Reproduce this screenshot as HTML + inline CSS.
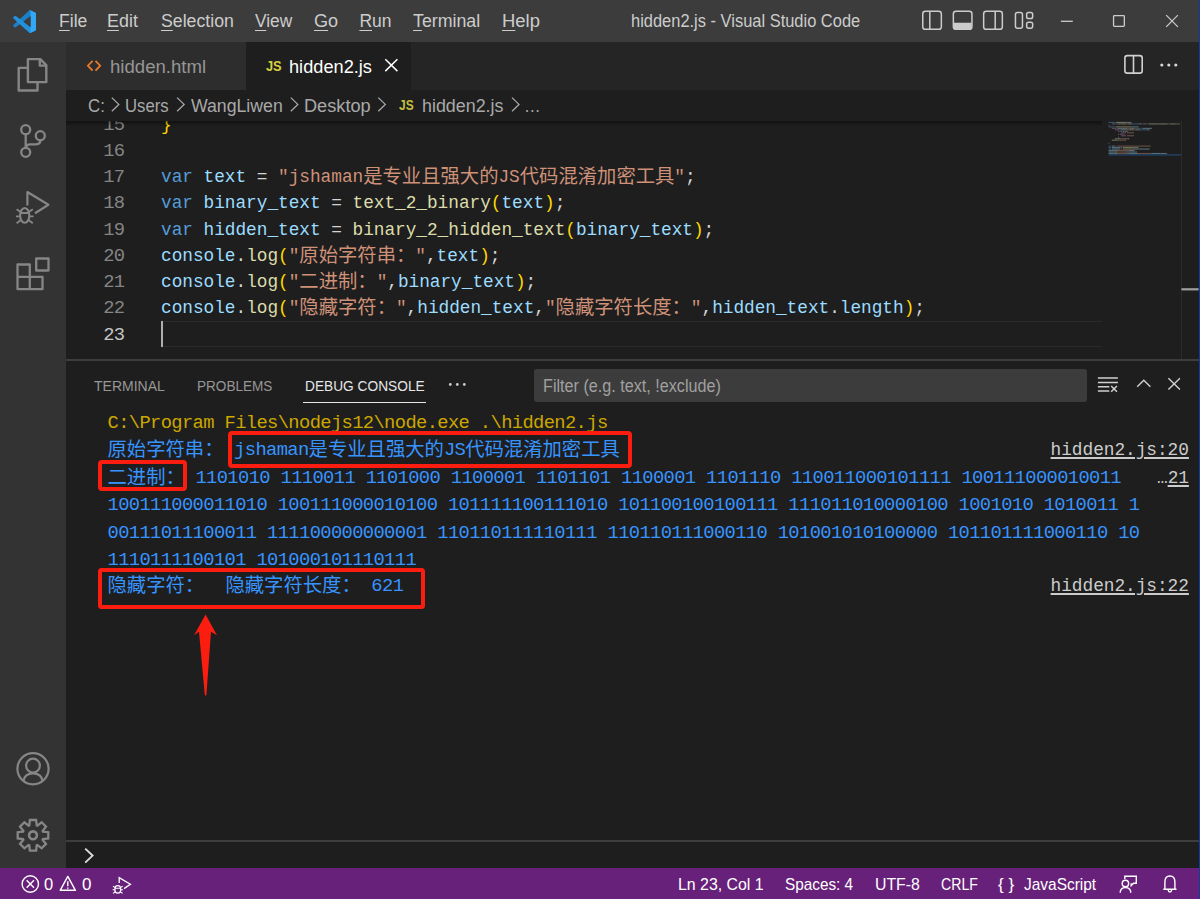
<!DOCTYPE html>
<html lang="zh-CN"><head><meta charset="utf-8"><title>hidden2.js - Visual Studio Code</title>
<style>
html,body{margin:0;padding:0;}
body{width:1200px;height:899px;overflow:hidden;background:#1e1e1e;position:relative;font-family:"Liberation Sans","Noto Sans CJK SC",sans-serif;}
.b{position:absolute;}
.t{position:absolute;line-height:0;white-space:pre;transform-origin:0 0;font-family:"Liberation Sans","Noto Sans CJK SC",sans-serif;}
.m{font-family:"Liberation Mono","Noto Sans CJK SC",monospace;}
.ln{position:absolute;left:0;height:26px;line-height:26px;white-space:pre;font-family:"Liberation Mono","Noto Sans CJK SC",monospace;font-size:17.8px;letter-spacing:-0.032px;color:#d4d4d4;}
.ln .c,.co .c{font-size:19.33px;letter-spacing:0;line-height:0;position:relative;top:1px;font-family:"Noto Sans CJK SC","Liberation Mono",monospace;}
.num{position:absolute;width:60px;text-align:right;font-size:18.8px;letter-spacing:-0.632px;}
.code{position:absolute;left:161px;}
.k{color:#569cd6}.v{color:#9cdcfe}.f{color:#dcdcaa}.s{color:#ce9178}.y{color:#ffd700}
.co{position:absolute;left:107.5px;height:27px;line-height:27px;white-space:pre;font-family:"Liberation Mono","Noto Sans CJK SC",monospace;font-size:18.8px;letter-spacing:-0.632px;color:#3794ff;}
.lk{position:absolute;height:27px;line-height:27px;white-space:pre;font-family:"Liberation Mono",monospace;font-size:17.8px;letter-spacing:-0.032px;color:#cccccc;}
.lk span{text-decoration:underline;text-underline-offset:2px;text-decoration-thickness:1.5px;}
svg{position:absolute;overflow:visible;}
u{text-decoration-thickness:1.4px;text-underline-offset:2.5px;}
</style></head><body>
<div class="b" style="left:0;top:0;width:1198.6px;height:41.6px;background:#3c3c3c"></div>
<div class="b" style="left:0;top:41.6px;width:66.2px;height:826.4px;background:#333333"></div>
<div class="b" style="left:66px;top:41.6px;width:1132.6px;height:48.2px;background:#252526"></div>
<div class="b" style="left:66px;top:41.6px;width:179.6px;height:48.2px;background:#2d2d2d"></div>
<div class="b" style="left:245.6px;top:41.6px;width:165.3px;height:48.4px;background:#1e1e1e"></div>
<div class="b" style="left:66px;top:90px;width:1132.6px;height:778px;background:#1e1e1e"></div>
<div class="b" style="left:0;top:868px;width:1198.6px;height:31px;background:#68217a"></div>
<div class="b" style="left:1198.6px;top:0;width:2px;height:899px;background:#0c3e9e"></div>
<div class="t" style="top:21.14px;font-size:17.5px;color:#cccccc;left:58.63px;transform:scaleX(1.0049);"><u>F</u>ile</div>
<div class="t" style="top:21.14px;font-size:17.5px;color:#cccccc;left:107.35px;transform:scaleX(1.0226);"><u>E</u>dit</div>
<div class="t" style="top:21.14px;font-size:17.5px;color:#cccccc;left:160.70px;transform:scaleX(1.0112);"><u>S</u>election</div>
<div class="t" style="top:21.14px;font-size:17.5px;color:#cccccc;left:255.00px;transform:scaleX(0.9913);"><u>V</u>iew</div>
<div class="t" style="top:21.14px;font-size:17.5px;color:#cccccc;left:314.15px;transform:scaleX(1.0314);"><u>G</u>o</div>
<div class="t" style="top:21.14px;font-size:17.5px;color:#cccccc;left:359.38px;"><u>R</u>un</div>
<div class="t" style="top:21.14px;font-size:17.5px;color:#cccccc;left:413.47px;transform:scaleX(1.0162);"><u>T</u>erminal</div>
<div class="t" style="top:21.14px;font-size:17.5px;color:#cccccc;left:501.56px;transform:scaleX(1.0541);"><u>H</u>elp</div>
<div class="t" style="top:21.14px;font-size:17.5px;color:#cccccc;left:630.97px;transform:scaleX(0.9398);">hidden2.js - Visual Studio Code</div>
<div class="t" style="top:66.94px;font-size:17.5px;color:#969696;left:110.09px;transform:scaleX(1.0626);">hidden.html</div>
<div class="t" style="top:66.94px;font-size:17.5px;color:#ffffff;left:288.86px;transform:scaleX(1.0398);">hidden2.js</div>
<div class="t" style="top:66.00px;font-size:15px;color:#d6d040;left:265.94px;transform:scaleX(0.8526);font-weight:bold;">JS</div>
<div class="t" style="top:386.17px;font-size:14.8px;color:#979797;left:94.45px;transform:scaleX(0.9455);">TERMINAL</div>
<div class="t" style="top:386.17px;font-size:14.8px;color:#979797;left:197.41px;transform:scaleX(0.9169);">PROBLEMS</div>
<div class="t" style="top:386.17px;font-size:14.8px;color:#e7e7e7;left:304.90px;transform:scaleX(0.9269);">DEBUG CONSOLE</div>
<div class="b" style="left:303px;top:401.8px;width:123px;height:1.4px;background:#e7e7e7"></div>
<div class="b" style="left:66px;top:359.4px;width:1132.6px;height:1.8px;background:#3d3d3d"></div>
<div class="b" style="left:534px;top:368.8px;width:553px;height:33px;background:#3c3c3c;border-radius:3px"></div>
<div class="t" style="top:385.94px;font-size:17.5px;color:#a0a0a0;left:542.74px;transform:scaleX(0.9238);">Filter (e.g. text, !exclude)</div>
<div class="t" style="top:884.42px;font-size:16.1px;color:#ffffff;left:44.48px;transform:scaleX(1.0248);">0</div>
<div class="t" style="top:884.42px;font-size:16.1px;color:#ffffff;left:81.97px;transform:scaleX(1.0559);">0</div>
<div class="t" style="top:884.42px;font-size:16.1px;color:#ffffff;left:677.51px;transform:scaleX(0.9863);">Ln 23, Col 1</div>
<div class="t" style="top:884.42px;font-size:16.1px;color:#ffffff;left:785.27px;transform:scaleX(0.9512);">Spaces: 4</div>
<div class="t" style="top:884.42px;font-size:16.1px;color:#ffffff;left:874.51px;transform:scaleX(0.9840);">UTF-8</div>
<div class="t" style="top:884.42px;font-size:16.1px;color:#ffffff;left:940.59px;transform:scaleX(0.8771);">CRLF</div>
<div class="t" style="top:884.42px;font-size:16.1px;color:#ffffff;left:998.48px;transform:scaleX(1.0584);">{ }</div>
<div class="t" style="top:884.42px;font-size:16.1px;color:#ffffff;left:1024.01px;transform:scaleX(0.9604);">JavaScript</div>
<div class="b" style="left:161px;top:320.70px;width:941px;height:26.24px;box-sizing:border-box;border-top:1.8px solid #2a2a2a;border-bottom:1.8px solid #2a2a2a"></div>
<div class="ln" style="top:112px"><span class="num" style="left:64.5px;color:#858585">15</span><span class="code"><span class="y">}</span></span></div>
<div class="ln" style="top:138px"><span class="num" style="left:64.5px;color:#858585">16</span><span class="code"></span></div>
<div class="ln" style="top:164px"><span class="num" style="left:64.5px;color:#858585">17</span><span class="code"><span class="k">var</span> <span class="v">text</span> = <span class="s">"jshaman<span class="c">是专业且强大的</span>JS<span class="c">代码混淆加密工具</span>"</span>;</span></div>
<div class="ln" style="top:190px"><span class="num" style="left:64.5px;color:#858585">18</span><span class="code"><span class="k">var</span> <span class="v">binary_text</span> = <span class="f">text_2_binary</span><span class="y">(</span><span class="v">text</span><span class="y">)</span>;</span></div>
<div class="ln" style="top:217px"><span class="num" style="left:64.5px;color:#858585">19</span><span class="code"><span class="k">var</span> <span class="v">hidden_text</span> = <span class="f">binary_2_hidden_text</span><span class="y">(</span><span class="v">binary_text</span><span class="y">)</span>;</span></div>
<div class="ln" style="top:243px"><span class="num" style="left:64.5px;color:#858585">20</span><span class="code"><span class="v">console</span>.<span class="f">log</span><span class="y">(</span><span class="s">"<span class="c">原始字符串：</span>"</span>,<span class="v">text</span><span class="y">)</span>;</span></div>
<div class="ln" style="top:269px"><span class="num" style="left:64.5px;color:#858585">21</span><span class="code"><span class="v">console</span>.<span class="f">log</span><span class="y">(</span><span class="s">"<span class="c">二进制：</span>"</span>,<span class="v">binary_text</span><span class="y">)</span>;</span></div>
<div class="ln" style="top:295px"><span class="num" style="left:64.5px;color:#858585">22</span><span class="code"><span class="v">console</span>.<span class="f">log</span><span class="y">(</span><span class="s">"<span class="c">隐藏字符：</span>"</span>,<span class="v">hidden_text</span>,<span class="s">"<span class="c">隐藏字符长度：</span>"</span>,<span class="v">hidden_text</span>.<span class="v">length</span><span class="y">)</span>;</span></div>
<div class="ln" style="top:322px"><span class="num" style="left:64.5px;color:#c6c6c6">23</span><span class="code"></span></div>
<div class="b" style="left:160.5px;top:320.70px;width:2.6px;height:26.24px;background:#aeafad"></div>
<div class="b" style="left:66px;top:90px;width:1132.6px;height:30.6px;background:#1e1e1e"></div>
<div class="b" style="left:66px;top:120.6px;width:1036px;height:5px;background:linear-gradient(#000000 0,rgba(0,0,0,0) 100%);opacity:.45"></div>
<div class="t" style="top:105.54px;font-size:17.5px;color:#a9a9a9;left:87.96px;transform:scaleX(0.9603);">C:</div>
<div class="t" style="top:105.54px;font-size:17.5px;color:#a9a9a9;left:125.21px;transform:scaleX(0.9533);">Users</div>
<div class="t" style="top:105.54px;font-size:17.5px;color:#a9a9a9;left:191.25px;transform:scaleX(1.0105);">WangLiwen</div>
<div class="t" style="top:105.54px;font-size:17.5px;color:#a9a9a9;left:303.58px;transform:scaleX(1.0383);">Desktop</div>
<div class="t" style="top:105.54px;font-size:17.5px;color:#a9a9a9;left:422.13px;transform:scaleX(1.0206);">hidden2.js</div>
<div class="t" style="top:105.54px;font-size:17.5px;color:#a9a9a9;left:524.17px;transform:scaleX(0.9524);">…</div>
<div class="t" style="top:104.81px;font-size:14.4px;color:#c3be3e;left:399.24px;transform:scaleX(0.8292);font-weight:bold;">JS</div>
<div class="b" style="left:1180.8px;top:121.3px;width:1.4px;height:238px;background:#2b2b2b"></div>
<div class="co" style="top:410px;color:#cca700;">C:\Program Files\nodejs12\node.exe .\hidden2.js</div>
<div class="co" style="top:437px;"><span class="c">原始字符串：</span> jshaman<span class="c">是专业且强大的</span>JS<span class="c">代码混淆加密工具</span></div>
<div class="co" style="top:465px;"><span class="c">二进制：</span> 1101010 1110011 1101000 1100001 1101101 1100001 1101110 110011000101111 100111000010011</div>
<div class="co" style="top:492px;">100111000011010 100111000010100 101111100111010 101100100100111 111011010000100 1001010 1010011 1</div>
<div class="co" style="top:520px;">00111011100011 111100000000001 110110111110111 110110111000110 101001010100000 101101111000110 10</div>
<div class="co" style="top:547px;">1110111100101 101000101110111</div>
<div class="co" style="top:573px;"><span class="c">隐藏字符：</span>  <span class="c">隐藏字符长度：</span> 621</div>
<div class="lk" style="top:437px;right:11.1px"><span>hidden2.js:20</span></div>
<div class="lk" style="top:465px;right:11.1px">…<span>21</span></div>
<div class="lk" style="top:573px;right:11.1px"><span>hidden2.js:22</span></div>
<div class="b" style="left:66px;top:840.3px;width:1132.6px;height:1.9px;background:#3d3d3d"></div>
<div class="b" style="left:228.4px;top:431.2px;width:404.1px;height:36.60000000000002px;box-sizing:border-box;border:4.0px solid #fb1e10;border-radius:4px"></div>
<div class="b" style="left:97.6px;top:459.9px;width:89.4px;height:30.80000000000001px;box-sizing:border-box;border:4.0px solid #fb1e10;border-radius:4px"></div>
<div class="b" style="left:98.2px;top:568.2px;width:327.3px;height:41.19999999999993px;box-sizing:border-box;border:4.0px solid #fb1e10;border-radius:3.5px"></div>
<svg style="left:0;top:0" width="1200" height="899" viewBox="0 0 1200 899"><polygon fill="#fb1e10" points="205.6,614.4 217,635.2 211,631.8 206.4,695 205.6,695.8 204.8,695 199,631.8 194.1,635.2"/></svg>
<svg style="left:13.0px;top:9.7px" width="23.3" height="23.3" viewBox="0 0 256 256" ><defs><clipPath id="vsm"><path clip-rule="evenodd" d="M181.534 254.252C185.566 255.823 190.164 255.722 194.234 253.764L246.94 228.403C252.478 225.738 256 220.132 256 213.983V42.0181C256 35.8689 252.478 30.2638 246.94 27.5988L194.234 2.23681C188.893 -0.333132 182.642 0.296344 177.955 3.70418C177.285 4.191 176.647 4.73454 176.049 5.33354L75.149 97.3862L31.1992 64.0247C27.1079 60.9191 21.3853 61.1735 17.5855 64.63L3.48936 77.4525C-1.15853 81.6805 -1.16386 88.9926 3.47785 93.2274L41.5926 128L3.47785 162.773C-1.16386 167.008 -1.15853 174.32 3.48936 178.548L17.5855 191.37C21.3853 194.827 27.1079 195.081 31.1992 191.976L75.149 158.614L176.049 250.667C177.645 252.264 179.519 253.467 181.534 254.252ZM192.039 69.8853L115.479 128L192.039 186.115V69.8853Z"/></clipPath></defs>
<g clip-path="url(#vsm)"><path d="M246.94 27.6383L194.193 2.24138C188.088 -0.698302 180.791 0.541721 175.999 5.33332L3.32371 162.773C-1.32082 167.008 -1.31548 174.32 3.33523 178.548L17.4399 191.37C21.2421 194.827 26.9682 195.081 31.0619 191.976L239.003 34.2269C245.979 28.9347 255.999 33.9103 255.999 42.6667V42.0543C255.999 35.9078 252.478 30.3047 246.94 27.6383Z" fill="#1b7fc4"/>
<path d="M246.94 228.362L194.193 253.759C188.088 256.698 180.791 255.458 175.999 250.667L3.32371 93.2272C-1.32082 88.9925 -1.31548 81.6802 3.33523 77.4523L17.4399 64.6298C21.2421 61.1733 26.9682 60.9188 31.0619 64.0245L239.003 221.773C245.979 227.065 255.999 222.09 255.999 213.333V213.946C255.999 220.092 252.478 225.695 246.94 228.362Z" fill="#2390dc"/>
<path d="M194.196 253.763C188.089 256.7 180.792 255.459 176 250.667C181.904 256.571 192 252.389 192 244.039V11.9606C192 3.61057 181.904 -0.571175 176 5.33321C180.792 0.541166 188.089 -0.700607 194.196 2.23648L246.934 27.5985C252.476 30.2635 256 35.8686 256 42.0178V213.983C256 220.132 252.476 225.737 246.934 228.402L194.196 253.763Z" fill="#32a8f5"/></g></svg>
<svg style="left:0px;top:0px" width="1200" height="42" viewBox="0 0 1200 42" ><rect x="922.75" y="11.35" width="18.60" height="18.00" rx="2.6" fill="none" stroke="#cccccc" stroke-width="1.5"/><line x1="929.80" y1="11.00" x2="929.80" y2="29.70" stroke="#cccccc" stroke-width="1.5" stroke-linecap="butt"/><rect x="953.35" y="11.35" width="18.60" height="18.00" rx="2.6" fill="none" stroke="#cccccc" stroke-width="1.5"/><path d="M953.6 22.8H971.7V27.3Q971.7 29.3 969.7 29.3H955.6Q953.6 29.3 953.6 27.3Z" fill="#cccccc"/><rect x="983.65" y="11.35" width="18.70" height="18.00" rx="2.6" fill="none" stroke="#cccccc" stroke-width="1.5"/><line x1="995.20" y1="11.00" x2="995.20" y2="29.70" stroke="#cccccc" stroke-width="1.5" stroke-linecap="butt"/><rect x="1015.45" y="12.45" width="7.00" height="15.70" rx="2" fill="none" stroke="#cccccc" stroke-width="1.5"/><rect x="1026.65" y="12.45" width="6.00" height="6.10" rx="1.8" fill="none" stroke="#cccccc" stroke-width="1.5"/><rect x="1026.65" y="22.25" width="6.00" height="5.90" rx="1.8" fill="none" stroke="#cccccc" stroke-width="1.5"/><line x1="1060.90" y1="21.30" x2="1072.80" y2="21.30" stroke="#cccccc" stroke-width="1.3" stroke-linecap="butt"/><rect x="1113.55" y="15.65" width="10.80" height="10.70" rx="0.8" fill="none" stroke="#cccccc" stroke-width="1.3"/><line x1="1166.20" y1="15.20" x2="1177.90" y2="26.90" stroke="#cccccc" stroke-width="1.2" stroke-linecap="butt"/><line x1="1177.90" y1="15.20" x2="1166.20" y2="26.90" stroke="#cccccc" stroke-width="1.2" stroke-linecap="butt"/></svg>
<svg style="left:0px;top:0px" width="66" height="899" viewBox="0 0 66 899" ><path d="M27.9 59.1H40.3L46.3 65.1V82.1H27.9Z M39.8 59.3V65.6H46.1 M27.9 67.9H18.7V90.5H37.5V82.1" fill="none" stroke="#868686" stroke-width="2.4" stroke-linejoin="round" stroke-linecap="butt"/><circle cx="25.7" cy="129.7" r="4.5" fill="none" stroke="#868686" stroke-width="2.3"/><circle cx="40.3" cy="135.7" r="4.5" fill="none" stroke="#868686" stroke-width="2.3"/><circle cx="25.7" cy="152.3" r="4.5" fill="none" stroke="#868686" stroke-width="2.3"/><path d="M25.7 134.2V147.8 M40.3 140.2Q40.3 144.4 35.5 144.4H30Q26.2 144.4 25.9 147.8" fill="none" stroke="#868686" stroke-width="2.3" stroke-linejoin="round" stroke-linecap="butt"/><path d="M27.4 205.6V192L48.4 204.7L35 213.2" fill="none" stroke="#868686" stroke-width="2.2" stroke-linejoin="round" stroke-linecap="butt"/><ellipse cx="24.7" cy="215.4" rx="4.6" ry="7.4" fill="none" stroke="#868686" stroke-width="2.1"/><path d="M20.2 213H29.2 M16.6 209.3L20.3 211.7 M32.8 209.3L29.1 211.7 M15.9 216.4H19.9 M33.5 216.4H29.5 M16.6 223.2L20.6 220.3 M32.8 223.2L28.8 220.3" fill="none" stroke="#868686" stroke-width="1.9" stroke-linejoin="round" stroke-linecap="butt"/><path d="M17.5 264.5H29.8V276.8H42.5V289.1H17.5Z M17.5 276.8H29.8V289.1" fill="none" stroke="#868686" stroke-width="2.3" stroke-linejoin="round" stroke-linecap="butt"/><path d="M36.2 258.5H48.5V270.5H36.2Z" fill="none" stroke="#868686" stroke-width="2.3" stroke-linejoin="round" stroke-linecap="butt"/><circle cx="33" cy="768.7" r="15.6" fill="none" stroke="#868686" stroke-width="2.2"/><circle cx="33" cy="765.6" r="6.9" fill="none" stroke="#868686" stroke-width="2.2"/><path d="M23.4 781Q24.6 773.4 33 773.4Q41.4 773.4 42.6 781" fill="none" stroke="#868686" stroke-width="2.2" stroke-linejoin="round" stroke-linecap="butt"/><path d="M36.71 825.37L36.11 820.01L29.89 820.01L29.29 825.37L28.60 825.65L24.39 822.29L19.99 826.69L23.35 830.90L23.07 831.59L17.71 832.19L17.71 838.41L23.07 839.01L23.35 839.70L19.99 843.91L24.39 848.31L28.60 844.95L29.29 845.23L29.89 850.59L36.11 850.59L36.71 845.23L37.40 844.95L41.61 848.31L46.01 843.91L42.65 839.70L42.93 839.01L48.29 838.41L48.29 832.19L42.93 831.59L42.65 830.90L46.01 826.69L41.61 822.29L37.40 825.65Z" fill="none" stroke="#868686" stroke-width="2.3" stroke-linejoin="miter" stroke-linecap="butt"/><circle cx="33.0" cy="835.3" r="3.9" fill="none" stroke="#868686" stroke-width="2.6"/></svg>
<svg style="left:0px;top:0px" width="1200" height="899" viewBox="0 0 1200 899" ><path d="M92.6 60.8L87.9 65.7L92.6 70.7 M95.5 60.8L100.2 65.7L95.5 70.7" fill="none" stroke="#e8792c" stroke-width="1.8" stroke-linejoin="miter" stroke-linecap="butt"/><path d="M385.3 59.3L397.4 71.1 M397.4 59.3L385.3 71.1" fill="none" stroke="#ffffff" stroke-width="1.5" stroke-linejoin="round" stroke-linecap="butt"/><rect x="1124.90" y="55.60" width="17.30" height="17.50" rx="2.4" fill="none" stroke="#d0d0d0" stroke-width="1.6"/><line x1="1133.50" y1="55.00" x2="1133.50" y2="73.60" stroke="#d0d0d0" stroke-width="1.6" stroke-linecap="butt"/><circle cx="1161.8" cy="65" r="1.55" fill="#d8d8d8"/><circle cx="1168.8" cy="65" r="1.55" fill="#d8d8d8"/><circle cx="1175.8" cy="65" r="1.55" fill="#d8d8d8"/><path d="M111.8 97.6L118.8 104.4L111.8 111.2" fill="none" stroke="#a9a9a9" stroke-width="1.3" stroke-linejoin="miter" stroke-linecap="butt"/><path d="M177.1 97.6L184.1 104.4L177.1 111.2" fill="none" stroke="#a9a9a9" stroke-width="1.3" stroke-linejoin="miter" stroke-linecap="butt"/><path d="M290.8 97.6L297.8 104.4L290.8 111.2" fill="none" stroke="#a9a9a9" stroke-width="1.3" stroke-linejoin="miter" stroke-linecap="butt"/><path d="M378.3 97.6L385.3 104.4L378.3 111.2" fill="none" stroke="#a9a9a9" stroke-width="1.3" stroke-linejoin="miter" stroke-linecap="butt"/><path d="M512.0 97.6L519.0 104.4L512.0 111.2" fill="none" stroke="#a9a9a9" stroke-width="1.3" stroke-linejoin="miter" stroke-linecap="butt"/><circle cx="450.3" cy="384.5" r="1.4" fill="#c8c8c8"/><circle cx="457.3" cy="384.5" r="1.4" fill="#c8c8c8"/><circle cx="464.3" cy="384.5" r="1.4" fill="#c8c8c8"/><path d="M1097.9 378.1H1117.9 M1097.9 382.5H1117.9 M1097.9 386.8H1109.3 M1097.9 391.1H1109.3" fill="none" stroke="#d0d0d0" stroke-width="1.5" stroke-linejoin="round" stroke-linecap="butt"/><path d="M1111.2 386L1116.9 391.7 M1116.9 386L1111.2 391.7" fill="none" stroke="#d0d0d0" stroke-width="1.5" stroke-linejoin="round" stroke-linecap="butt"/><path d="M1137.2 386.8L1143.8 380.2L1150.4 386.8" fill="none" stroke="#d0d0d0" stroke-width="1.4" stroke-linejoin="miter" stroke-linecap="butt"/><path d="M1168.4 378.2L1179.9 389.6 M1179.9 378.2L1168.4 389.6" fill="none" stroke="#d0d0d0" stroke-width="1.4" stroke-linejoin="round" stroke-linecap="butt"/><path d="M85.2 848.6L92.6 855.6L85.2 862.6" fill="none" stroke="#dcdcdc" stroke-width="1.9" stroke-linejoin="miter" stroke-linecap="butt"/><rect x="1181.4" y="288.2" width="17.2" height="2.2" fill="#a0a0a0"/><circle cx="30.3" cy="884" r="8.2" fill="none" stroke="#ffffff" stroke-width="1.4"/><path d="M26.6 880.3L34 887.7 M34 880.3L26.6 887.7" fill="none" stroke="#ffffff" stroke-width="1.4" stroke-linejoin="round" stroke-linecap="butt"/><path d="M67.8 876.4L75.4 890.3H60.2Z" fill="none" stroke="#ffffff" stroke-width="1.4" stroke-linejoin="round" stroke-linecap="butt"/><path d="M67.8 881.2V886.2 M67.8 887.4V888.8" fill="none" stroke="#ffffff" stroke-width="1.4" stroke-linejoin="round" stroke-linecap="butt"/><path d="M119.2 883V877.6L130.4 884.3L124 888.6" fill="none" stroke="#ffffff" stroke-width="1.3" stroke-linejoin="miter" stroke-linecap="butt"/><ellipse cx="117.8" cy="889.4" rx="2.9" ry="3.7" fill="none" stroke="#ffffff" stroke-width="1.3"/><path d="M115 888.3H120.6 M113 886.3L115.2 887.6 M122.6 886.3L120.4 887.6 M112.6 889.8H115 M123 889.8H120.6 M113 893.4L115.4 891.8 M122.6 893.4L120.2 891.8" fill="none" stroke="#ffffff" stroke-width="1.1" stroke-linejoin="round" stroke-linecap="butt"/><circle cx="1125.4" cy="883.4" r="3.2" fill="none" stroke="#ffffff" stroke-width="1.4"/><path d="M1120.2 892.8Q1120.2 887.6 1125.4 887.6Q1130.8 887.6 1130.8 892.8" fill="none" stroke="#ffffff" stroke-width="1.4" stroke-linejoin="round" stroke-linecap="butt"/><path d="M1124.8 879V876.2H1136.3V883.2H1133.6L1131.2 885.6V883.2" fill="none" stroke="#ffffff" stroke-width="1.4" stroke-linejoin="miter" stroke-linecap="butt"/><path d="M1163.3 889.2H1176.5 M1164.9 889.2V882Q1164.9 876 1169.9 876Q1174.9 876 1174.9 882V889.2 M1168.2 890Q1168.4 892 1169.9 892Q1171.4 892 1171.6 890" fill="none" stroke="#ffffff" stroke-width="1.4" stroke-linejoin="round" stroke-linecap="butt"/></svg>
<svg style="left:0px;top:0px" width="1200" height="899" viewBox="0 0 1200 899" ><g opacity="0.42"><rect x="1108.60" y="121.90" width="6.32" height="1.1" fill="#569cd6"/><rect x="1115.71" y="121.90" width="10.27" height="1.1" fill="#dcdcaa"/><rect x="1125.98" y="121.90" width="0.79" height="1.1" fill="#d4d4d4"/><rect x="1126.77" y="121.90" width="3.16" height="1.1" fill="#9cdcfe"/><rect x="1129.93" y="121.90" width="1.58" height="1.1" fill="#d4d4d4"/><rect x="1111.76" y="123.38" width="4.74" height="1.1" fill="#c586c0"/><rect x="1117.29" y="123.38" width="3.16" height="1.1" fill="#9cdcfe"/><rect x="1120.45" y="123.38" width="0.79" height="1.1" fill="#d4d4d4"/><rect x="1121.24" y="123.38" width="3.95" height="1.1" fill="#dcdcaa"/><rect x="1125.19" y="123.38" width="0.79" height="1.1" fill="#d4d4d4"/><rect x="1125.98" y="123.38" width="1.58" height="1.1" fill="#ce9178"/><rect x="1127.56" y="123.38" width="1.58" height="1.1" fill="#d4d4d4"/><rect x="1129.14" y="123.38" width="2.37" height="1.1" fill="#dcdcaa"/><rect x="1131.51" y="123.38" width="0.79" height="1.1" fill="#d4d4d4"/><rect x="1132.30" y="123.38" width="6.32" height="1.1" fill="#569cd6"/><rect x="1138.62" y="123.38" width="0.79" height="1.1" fill="#d4d4d4"/><rect x="1139.41" y="123.38" width="0.79" height="1.1" fill="#9cdcfe"/><rect x="1140.20" y="123.38" width="1.58" height="1.1" fill="#d4d4d4"/><rect x="1142.57" y="123.38" width="4.74" height="1.1" fill="#c586c0"/><rect x="1148.10" y="123.38" width="0.79" height="1.1" fill="#9cdcfe"/><rect x="1148.89" y="123.38" width="0.79" height="1.1" fill="#d4d4d4"/><rect x="1149.68" y="123.38" width="7.90" height="1.1" fill="#dcdcaa"/><rect x="1157.58" y="123.38" width="2.37" height="1.1" fill="#d4d4d4"/><rect x="1159.95" y="123.38" width="6.32" height="1.1" fill="#dcdcaa"/><rect x="1166.27" y="123.38" width="0.79" height="1.1" fill="#d4d4d4"/><rect x="1167.06" y="123.38" width="0.79" height="1.1" fill="#b5cea8"/><rect x="1167.85" y="123.38" width="0.79" height="1.1" fill="#d4d4d4"/><rect x="1169.43" y="123.38" width="2.37" height="1.1" fill="#d4d4d4"/><rect x="1171.80" y="123.38" width="3.16" height="1.1" fill="#dcdcaa"/><rect x="1174.96" y="123.38" width="0.79" height="1.1" fill="#d4d4d4"/><rect x="1175.75" y="123.38" width="2.37" height="1.1" fill="#ce9178"/><rect x="1178.12" y="123.38" width="1.58" height="1.1" fill="#d4d4d4"/><rect x="1108.60" y="124.86" width="0.79" height="1.1" fill="#d4d4d4"/><rect x="1108.60" y="126.33" width="6.32" height="1.1" fill="#569cd6"/><rect x="1115.71" y="126.33" width="15.80" height="1.1" fill="#dcdcaa"/><rect x="1131.51" y="126.33" width="0.79" height="1.1" fill="#d4d4d4"/><rect x="1132.30" y="126.33" width="4.74" height="1.1" fill="#9cdcfe"/><rect x="1137.04" y="126.33" width="1.58" height="1.1" fill="#d4d4d4"/><rect x="1111.76" y="127.81" width="4.74" height="1.1" fill="#c586c0"/><rect x="1117.29" y="127.81" width="4.74" height="1.1" fill="#9cdcfe"/><rect x="1122.03" y="127.81" width="0.79" height="1.1" fill="#d4d4d4"/><rect x="1122.82" y="127.81" width="3.95" height="1.1" fill="#dcdcaa"/><rect x="1126.77" y="127.81" width="0.79" height="1.1" fill="#d4d4d4"/><rect x="1127.56" y="127.81" width="2.37" height="1.1" fill="#ce9178"/><rect x="1129.93" y="127.81" width="1.58" height="1.1" fill="#d4d4d4"/><rect x="1131.51" y="127.81" width="2.37" height="1.1" fill="#dcdcaa"/><rect x="1133.88" y="127.81" width="0.79" height="1.1" fill="#d4d4d4"/><rect x="1134.67" y="127.81" width="6.32" height="1.1" fill="#569cd6"/><rect x="1141.78" y="127.81" width="0.79" height="1.1" fill="#d4d4d4"/><rect x="1142.57" y="127.81" width="7.90" height="1.1" fill="#9cdcfe"/><rect x="1150.47" y="127.81" width="1.58" height="1.1" fill="#d4d4d4"/><rect x="1114.92" y="129.29" width="4.74" height="1.1" fill="#c586c0"/><rect x="1120.45" y="129.29" width="7.90" height="1.1" fill="#9cdcfe"/><rect x="1128.35" y="129.29" width="0.79" height="1.1" fill="#d4d4d4"/><rect x="1129.14" y="129.29" width="3.95" height="1.1" fill="#dcdcaa"/><rect x="1133.09" y="129.29" width="0.79" height="1.1" fill="#d4d4d4"/><rect x="1133.88" y="129.29" width="1.58" height="1.1" fill="#ce9178"/><rect x="1135.46" y="129.29" width="1.58" height="1.1" fill="#d4d4d4"/><rect x="1137.04" y="129.29" width="2.37" height="1.1" fill="#dcdcaa"/><rect x="1139.41" y="129.29" width="0.79" height="1.1" fill="#d4d4d4"/><rect x="1140.20" y="129.29" width="6.32" height="1.1" fill="#569cd6"/><rect x="1146.52" y="129.29" width="0.79" height="1.1" fill="#d4d4d4"/><rect x="1147.31" y="129.29" width="0.79" height="1.1" fill="#9cdcfe"/><rect x="1148.10" y="129.29" width="1.58" height="1.1" fill="#d4d4d4"/><rect x="1118.08" y="130.77" width="1.58" height="1.1" fill="#c586c0"/><rect x="1120.45" y="130.77" width="0.79" height="1.1" fill="#d4d4d4"/><rect x="1121.24" y="130.77" width="0.79" height="1.1" fill="#9cdcfe"/><rect x="1122.82" y="130.77" width="1.58" height="1.1" fill="#d4d4d4"/><rect x="1125.19" y="130.77" width="0.79" height="1.1" fill="#b5cea8"/><rect x="1125.98" y="130.77" width="1.58" height="1.1" fill="#d4d4d4"/><rect x="1121.24" y="132.25" width="4.74" height="1.1" fill="#c586c0"/><rect x="1126.77" y="132.25" width="6.32" height="1.1" fill="#ce9178"/><rect x="1133.09" y="132.25" width="0.79" height="1.1" fill="#d4d4d4"/><rect x="1118.08" y="133.72" width="0.79" height="1.1" fill="#d4d4d4"/><rect x="1119.66" y="133.72" width="3.16" height="1.1" fill="#c586c0"/><rect x="1123.61" y="133.72" width="0.79" height="1.1" fill="#d4d4d4"/><rect x="1121.24" y="135.20" width="4.74" height="1.1" fill="#c586c0"/><rect x="1126.77" y="135.20" width="6.32" height="1.1" fill="#ce9178"/><rect x="1133.09" y="135.20" width="0.79" height="1.1" fill="#d4d4d4"/><rect x="1118.08" y="136.68" width="0.79" height="1.1" fill="#d4d4d4"/><rect x="1114.92" y="138.16" width="2.37" height="1.1" fill="#d4d4d4"/><rect x="1117.29" y="138.16" width="3.16" height="1.1" fill="#dcdcaa"/><rect x="1120.45" y="138.16" width="0.79" height="1.1" fill="#d4d4d4"/><rect x="1121.24" y="138.16" width="6.32" height="1.1" fill="#ce9178"/><rect x="1127.56" y="138.16" width="1.58" height="1.1" fill="#d4d4d4"/><rect x="1111.76" y="139.64" width="2.37" height="1.1" fill="#d4d4d4"/><rect x="1114.13" y="139.64" width="3.16" height="1.1" fill="#dcdcaa"/><rect x="1117.29" y="139.64" width="0.79" height="1.1" fill="#d4d4d4"/><rect x="1118.08" y="139.64" width="6.32" height="1.1" fill="#ce9178"/><rect x="1124.40" y="139.64" width="1.58" height="1.1" fill="#d4d4d4"/><rect x="1108.60" y="142.59" width="0.79" height="1.1" fill="#d4d4d4"/><rect x="1108.60" y="145.55" width="2.37" height="1.1" fill="#569cd6"/><rect x="1111.76" y="145.55" width="3.16" height="1.1" fill="#9cdcfe"/><rect x="1115.71" y="145.55" width="0.79" height="1.1" fill="#d4d4d4"/><rect x="1117.29" y="145.55" width="32.39" height="1.1" fill="#ce9178"/><rect x="1149.68" y="145.55" width="0.79" height="1.1" fill="#d4d4d4"/><rect x="1108.60" y="147.03" width="2.37" height="1.1" fill="#569cd6"/><rect x="1111.76" y="147.03" width="8.69" height="1.1" fill="#9cdcfe"/><rect x="1121.24" y="147.03" width="0.79" height="1.1" fill="#d4d4d4"/><rect x="1122.82" y="147.03" width="10.27" height="1.1" fill="#dcdcaa"/><rect x="1133.09" y="147.03" width="0.79" height="1.1" fill="#d4d4d4"/><rect x="1133.88" y="147.03" width="3.16" height="1.1" fill="#9cdcfe"/><rect x="1137.04" y="147.03" width="1.58" height="1.1" fill="#d4d4d4"/><rect x="1108.60" y="148.50" width="2.37" height="1.1" fill="#569cd6"/><rect x="1111.76" y="148.50" width="8.69" height="1.1" fill="#9cdcfe"/><rect x="1121.24" y="148.50" width="0.79" height="1.1" fill="#d4d4d4"/><rect x="1122.82" y="148.50" width="15.80" height="1.1" fill="#dcdcaa"/><rect x="1138.62" y="148.50" width="0.79" height="1.1" fill="#d4d4d4"/><rect x="1139.41" y="148.50" width="8.69" height="1.1" fill="#9cdcfe"/><rect x="1148.10" y="148.50" width="1.58" height="1.1" fill="#d4d4d4"/><rect x="1108.60" y="149.98" width="5.53" height="1.1" fill="#9cdcfe"/><rect x="1114.13" y="149.98" width="0.79" height="1.1" fill="#d4d4d4"/><rect x="1114.92" y="149.98" width="2.37" height="1.1" fill="#dcdcaa"/><rect x="1117.29" y="149.98" width="0.79" height="1.1" fill="#d4d4d4"/><rect x="1118.08" y="149.98" width="11.06" height="1.1" fill="#ce9178"/><rect x="1129.14" y="149.98" width="0.79" height="1.1" fill="#d4d4d4"/><rect x="1129.93" y="149.98" width="3.16" height="1.1" fill="#9cdcfe"/><rect x="1133.09" y="149.98" width="1.58" height="1.1" fill="#d4d4d4"/><rect x="1108.60" y="151.46" width="5.53" height="1.1" fill="#9cdcfe"/><rect x="1114.13" y="151.46" width="0.79" height="1.1" fill="#d4d4d4"/><rect x="1114.92" y="151.46" width="2.37" height="1.1" fill="#dcdcaa"/><rect x="1117.29" y="151.46" width="0.79" height="1.1" fill="#d4d4d4"/><rect x="1118.08" y="151.46" width="7.90" height="1.1" fill="#ce9178"/><rect x="1125.98" y="151.46" width="0.79" height="1.1" fill="#d4d4d4"/><rect x="1126.77" y="151.46" width="8.69" height="1.1" fill="#9cdcfe"/><rect x="1135.46" y="151.46" width="1.58" height="1.1" fill="#d4d4d4"/><rect x="1108.60" y="152.94" width="5.53" height="1.1" fill="#9cdcfe"/><rect x="1114.13" y="152.94" width="0.79" height="1.1" fill="#d4d4d4"/><rect x="1114.92" y="152.94" width="2.37" height="1.1" fill="#dcdcaa"/><rect x="1117.29" y="152.94" width="0.79" height="1.1" fill="#d4d4d4"/><rect x="1118.08" y="152.94" width="9.48" height="1.1" fill="#ce9178"/><rect x="1127.56" y="152.94" width="0.79" height="1.1" fill="#d4d4d4"/><rect x="1128.35" y="152.94" width="8.69" height="1.1" fill="#9cdcfe"/><rect x="1137.04" y="152.94" width="0.79" height="1.1" fill="#d4d4d4"/><rect x="1137.83" y="152.94" width="12.64" height="1.1" fill="#ce9178"/><rect x="1150.47" y="152.94" width="0.79" height="1.1" fill="#d4d4d4"/><rect x="1151.26" y="152.94" width="8.69" height="1.1" fill="#9cdcfe"/><rect x="1159.95" y="152.94" width="0.79" height="1.1" fill="#d4d4d4"/><rect x="1160.74" y="152.94" width="4.74" height="1.1" fill="#9cdcfe"/><rect x="1165.48" y="152.94" width="1.58" height="1.1" fill="#d4d4d4"/></g><rect x="1108.4" y="154.32" width="72.6" height="1.2" fill="#214870"/></svg>
<!--ICONS5-->
</body></html>
